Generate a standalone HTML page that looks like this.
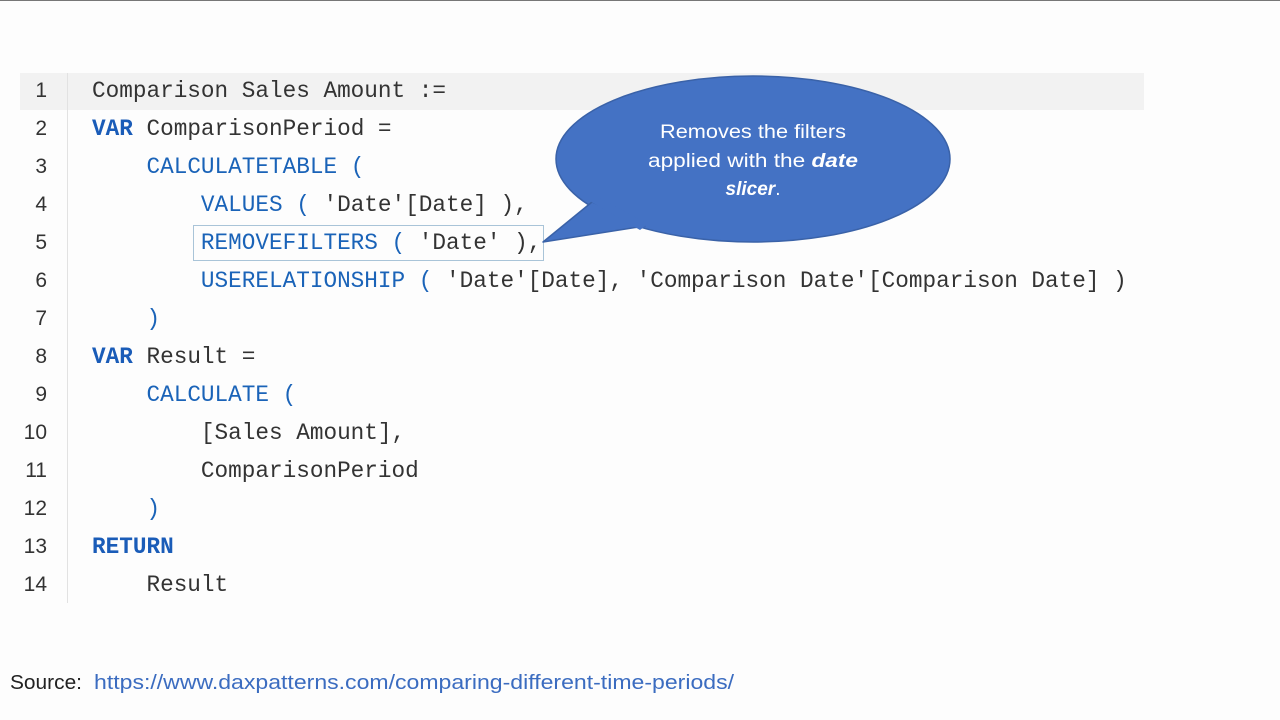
<!DOCTYPE html>
<html><head><meta charset="utf-8"><style>
html,body{margin:0;padding:0;}
body{width:1280px;height:720px;background:#fdfdfd;position:relative;overflow:hidden;font-family:"Liberation Mono",monospace;}
.topline{position:absolute;left:0;top:0;width:1280px;height:1px;background:#777;}
.hl{position:absolute;left:20px;top:73px;width:1124px;height:37px;background:#f2f2f2;}
.gut{position:absolute;left:67px;top:73px;width:1px;height:530px;background:#e2e2e2;}
.ln{position:absolute;left:0;width:47px;text-align:right;font-family:"Liberation Sans",sans-serif;font-size:21px;color:#333;line-height:38px;}
.c{position:absolute;left:92px;font-size:22.7px;line-height:38px;color:#333;white-space:pre;}
.k{color:#1a63b8;}
.b{color:#1a5cb8;font-weight:bold;}
.box{position:absolute;left:193px;top:225px;width:349px;height:34px;border:1px solid #a9c4d8;}
svg{position:absolute;left:0;top:0;}
</style></head><body>
<div class="topline"></div>
<div class="hl"></div>
<div class="gut"></div>
<div class="box"></div>
<div class="ln" style="top:72px">1</div>
<div class="ln" style="top:110px">2</div>
<div class="ln" style="top:148px">3</div>
<div class="ln" style="top:186px">4</div>
<div class="ln" style="top:224px">5</div>
<div class="ln" style="top:262px">6</div>
<div class="ln" style="top:300px">7</div>
<div class="ln" style="top:338px">8</div>
<div class="ln" style="top:376px">9</div>
<div class="ln" style="top:414px">10</div>
<div class="ln" style="top:452px">11</div>
<div class="ln" style="top:490px">12</div>
<div class="ln" style="top:528px">13</div>
<div class="ln" style="top:566px">14</div>
<div class="c" style="top:72px">Comparison Sales Amount :=</div>
<div class="c" style="top:110px"><span class="b">VAR</span> ComparisonPeriod =</div>
<div class="c" style="top:148px">    <span class="k">CALCULATETABLE (</span></div>
<div class="c" style="top:186px">        <span class="k">VALUES (</span> 'Date'[Date] ),</div>
<div class="c" style="top:224px">        <span class="k">REMOVEFILTERS (</span> 'Date' ),</div>
<div class="c" style="top:262px">        <span class="k">USERELATIONSHIP (</span> 'Date'[Date], 'Comparison Date'[Comparison Date] )</div>
<div class="c" style="top:300px">    <span class="k">)</span></div>
<div class="c" style="top:338px"><span class="b">VAR</span> Result =</div>
<div class="c" style="top:376px">    <span class="k">CALCULATE (</span></div>
<div class="c" style="top:414px">        [Sales Amount],</div>
<div class="c" style="top:452px">        ComparisonPeriod</div>
<div class="c" style="top:490px">    <span class="k">)</span></div>
<div class="c" style="top:528px"><span class="b">RETURN</span></div>
<div class="c" style="top:566px">    Result</div>
<svg width="1280" height="720" xmlns="http://www.w3.org/2000/svg">
<ellipse cx="753" cy="159" rx="197" ry="83" fill="#4472c4" stroke="#3a62a8" stroke-width="1.5"/>
<path d="M543,242 L592,202 L645,226 Z" fill="#4472c4" stroke="#3a62a8" stroke-width="1.5" stroke-linejoin="round"/>
<path d="M588,200 L600,198 L648,224 L640,230 Z" fill="#4472c4"/>
<g font-family="Liberation Sans, sans-serif" font-size="19" fill="#fff" text-anchor="middle">
<text x="753" y="138" textLength="186" lengthAdjust="spacingAndGlyphs">Removes the filters</text>
<text x="753" y="167" textLength="210" lengthAdjust="spacingAndGlyphs">applied with the <tspan font-weight="bold" font-style="italic">date</tspan></text>
<text x="753" y="195"><tspan font-weight="bold" font-style="italic">slicer</tspan>.</text>
</g>
<g font-family="Liberation Sans, sans-serif" font-size="20">
<text x="10" y="689" fill="#222" textLength="72" lengthAdjust="spacingAndGlyphs">Source:</text>
<text x="94" y="689" fill="#3b6cc0" textLength="640" lengthAdjust="spacingAndGlyphs">https://www.daxpatterns.com/comparing-different-time-periods/</text>
</g>
</svg>
</body></html>
